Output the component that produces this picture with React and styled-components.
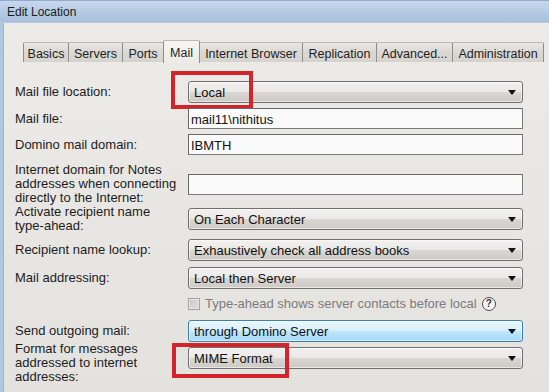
import React from "react";
import styled, { createGlobalStyle } from "styled-components";

const GlobalStyle = createGlobalStyle`
  html, body {
    margin: 0;
    padding: 0;
  }
  body {
    font-family: "Liberation Sans", Arial, sans-serif;
    background: #e9e7e4;
  }
`;

const tabs = [
  { label: "Basics", w: 45 },
  { label: "Servers", w: 54 },
  { label: "Ports", w: 41 },
  { label: "Mail", w: 36, active: true },
  { label: "Internet Browser", w: 103 },
  { label: "Replication", w: 74 },
  { label: "Advanced...", w: 76 },
  { label: "Administration", w: 91 },
];

function Arrow() {
  return (
    <svg width="8" height="5" viewBox="0 0 8 5">
      <polygon points="0,0 8,0 4,5" fill="#111" />
    </svg>
  );
}

function Select({ value, $hot }) {
  return (
    <Combo $hot={$hot}>
      <span>{value}</span>
      <Arrow />
    </Combo>
  );
}

export default function App() {
  return (
    <Window>
      <GlobalStyle />
      <TitleBar>Edit Location</TitleBar>
      <Body>
        <TabStrip>
          {tabs.map((t) => (
            <Tab key={t.label} $w={t.w} $active={t.active}>
              {t.label}
            </Tab>
          ))}
        </TabStrip>

        <Form>
          <Row $mt={19}>
            <Label>Mail file location:</Label>
            <Field>
              <Select value="Local" />
              <Highlight $left={-17} $top={-10} $w={82} $h={38} />
            </Field>
          </Row>

          <Row $mt={5}>
            <Label>Mail file:</Label>
            <Field>
              <TextBox>mail11\nithitus</TextBox>
            </Field>
          </Row>

          <Row $mt={5}>
            <Label>Domino mail domain:</Label>
            <Field>
              <TextBox>IBMTH</TextBox>
            </Field>
          </Row>

          <Row $mt={8}>
            <Label>
              Internet domain for Notes
              <br />
              addresses when connecting
              <br />
              directly to the Internet:
            </Label>
            <Field>
              <TextBox />
            </Field>
          </Row>

          <Row $mt={0}>
            <Label>
              Activate recipient name
              <br />
              type-ahead:
            </Label>
            <Field>
              <Select value="On Each Character" />
            </Field>
          </Row>

          <Row $mt={6}>
            <Label>Recipient name lookup:</Label>
            <Field>
              <Select value="Exhaustively check all address books" />
            </Field>
          </Row>

          <Row $mt={6}>
            <Label>Mail addressing:</Label>
            <Field>
              <Select value="Local then Server" />
            </Field>
          </Row>

          <Row $mt={8}>
            <Label />
            <Field>
              <CheckLine>
                <CheckBox />
                <span>Type-ahead shows server contacts before local</span>
                <Help>?</Help>
              </CheckLine>
            </Field>
          </Row>

          <Row $mt={10}>
            <Label>Send outgoing mail:</Label>
            <Field>
              <Select value="through Domino Server" $hot />
            </Field>
          </Row>

          <Row $mt={0} $top>
            <Label>
              Format for messages
              <br />
              addressed to internet
              <br />
              addresses:
            </Label>
            <Field $offset={5}>
              <Select value="MIME Format" />
              <Highlight $left={-16} $top={-4} $w={117} $h={35} />
            </Field>
          </Row>
        </Form>
      </Body>
    </Window>
  );
}

const Window = styled.div`
  width: 549px;
  height: 392px;
  overflow: hidden;
  display: flex;
  flex-direction: column;
`;

const TitleBar = styled.div`
  height: 23px;
  box-sizing: border-box;
  padding-left: 7px;
  display: flex;
  align-items: center;
  font-size: 12px;
  color: #1b1b1b;
  border-top: 1px solid #93abc8;
  background: linear-gradient(#c6d8ed, #b2c8e2 60%, #a9c0dc);
  border-bottom: 1px solid #b9c6d4;
`;

const Body = styled.div`
  flex: 1;
  border-left: 3px solid #b0c7e1;
  box-shadow: inset 1px 0 #a3b4c8;
  background: linear-gradient(#ecebe8, #e4e2df);
`;

const TabStrip = styled.div`
  margin-top: 17px;
  height: 22px;
  padding-left: 20px;
  display: flex;
  align-items: flex-end;
`;

const Tab = styled.div`
  box-sizing: border-box;
  width: ${(p) => p.$w + 1}px;
  height: ${(p) => (p.$active ? 23 : 20)}px;
  margin-bottom: ${(p) => (p.$active ? -1 : 0)}px;
  margin-left: -1px;
  position: relative;
  z-index: ${(p) => (p.$active ? 1 : 0)};
  display: flex;
  align-items: center;
  justify-content: center;
  padding-top: ${(p) => (p.$active ? 1 : 2)}px;
  font-size: 12.5px;
  color: #1e1e1e;
  white-space: nowrap;
  border: 1px solid #8d8d8d;
  border-top-color: #b9b9b9;
  border-bottom: none;
  border-radius: 2px 2px 0 0;
  background: ${(p) =>
    p.$active
      ? "linear-gradient(#f6f5f3, #eceae7)"
      : "linear-gradient(#eae8e5, #dcd9d5 45%, #d6d3cf)"};

  &:first-child {
    margin-left: 0;
  }
`;

const Form = styled.div`
  padding-left: 12px;
  display: flex;
  flex-direction: column;
`;

const Row = styled.div`
  display: flex;
  align-items: ${(p) => (p.$top ? "flex-start" : "center")};
  margin-top: ${(p) => p.$mt}px;
`;

const Label = styled.div`
  width: 173px;
  flex-shrink: 0;
  font-size: 13px;
  line-height: 14px;
  color: #1c1c1c;
`;

const Field = styled.div`
  position: relative;
  width: 335px;
  margin-top: ${(p) => p.$offset || 0}px;
`;

const Combo = styled.div`
  box-sizing: border-box;
  height: 22px;
  display: flex;
  align-items: center;
  justify-content: space-between;
  padding: 1px 6px 0 5px;
  font-size: 13px;
  color: #111;
  border: 1px solid ${(p) => (p.$hot ? "#3c7fb1" : "#707070")};
  border-radius: 3px;
  background: ${(p) =>
    p.$hot
      ? "linear-gradient(#eaf6fd, #d9f0fc 48%, #bee6fd 52%, #a7d9f5)"
      : "linear-gradient(#f2f1ef, #ebe9e7 48%, #dad7d3 52%, #cdc9c5)"};
  box-shadow: inset 0 0 0 1px rgba(255, 255, 255, 0.55);
`;

const TextBox = styled.div`
  box-sizing: border-box;
  height: 21px;
  display: flex;
  align-items: center;
  padding: 1px 2px 0;
  font-size: 13px;
  color: #111;
  background: #fafafa;
  border: 1px solid #686868;
  border-right-color: #7a7a7a;
  border-bottom-color: #7a7a7a;
`;

const CheckLine = styled.div`
  display: flex;
  align-items: center;
  gap: 5px;
  font-size: 13px;
  color: #7b7b7b;
  height: 13px;
`;

const CheckBox = styled.span`
  box-sizing: border-box;
  width: 12px;
  height: 12px;
  border: 1px solid #a3a3a3;
  background: linear-gradient(135deg, #c9c9c9, #dedede);
  box-shadow: inset 0 0 0 1px #e6e6e6;
`;

const Help = styled.span`
  box-sizing: border-box;
  width: 14px;
  height: 14px;
  border: 1px solid #4a4a4a;
  border-radius: 50%;
  display: flex;
  align-items: center;
  justify-content: center;
  font-size: 10px;
  font-weight: bold;
  color: #3a3a3a;
  background: #f5f5f5;
`;

const Highlight = styled.div`
  position: absolute;
  left: ${(p) => p.$left}px;
  top: ${(p) => p.$top}px;
  width: ${(p) => p.$w}px;
  height: ${(p) => p.$h}px;
  box-sizing: border-box;
  border: 4px solid #d3232b;
  pointer-events: none;
`;
